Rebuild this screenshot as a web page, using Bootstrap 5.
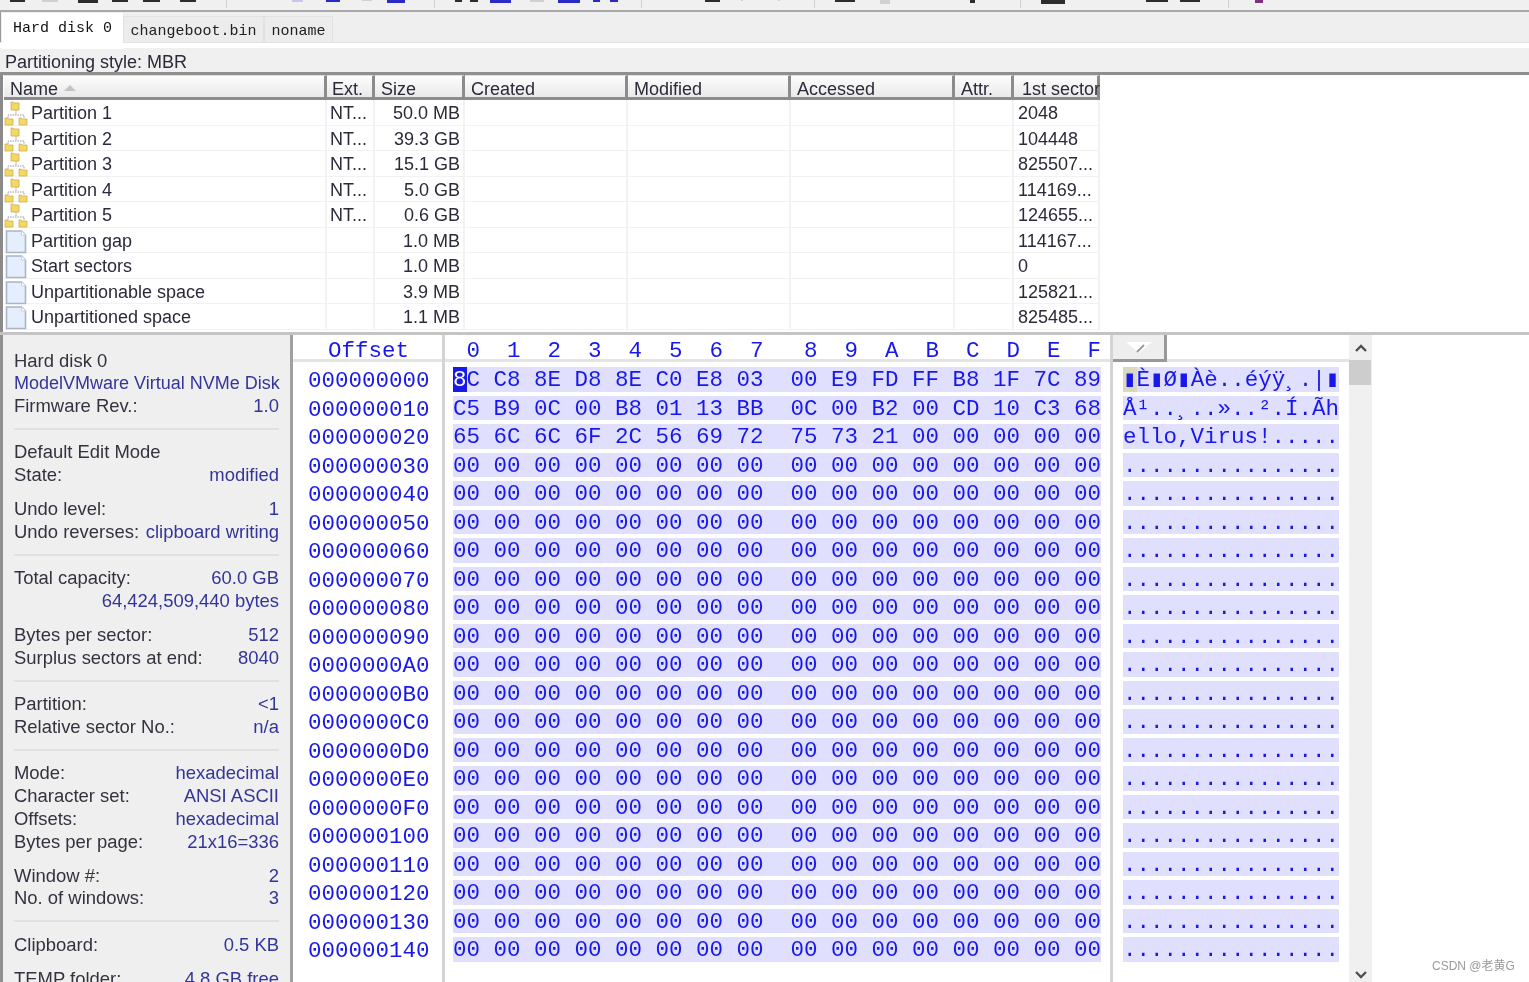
<!DOCTYPE html>
<html lang="en">
<head>
<meta charset="utf-8">
<title>WinHex</title>
<link rel="stylesheet" href="https://cdn.jsdelivr.net/npm/bootstrap@5.3.0/dist/css/bootstrap.min.css">
<style>
html,body{height:982px;overflow:hidden;background:#fff}
body{font-family:"Liberation Sans",Arial,sans-serif;font-size:18px;color:#2a2a3a;position:relative;filter:blur(.35px)}
.tool-strip{display:block;height:10px;background:#f0f0f0}
.tool-rule{height:2px;background:#a8a8a8}
.tab-bar{height:31px;background:#efefef;padding:1px 0 0 1px;border:0;border-left:1px solid #999;align-items:flex-start}
.tab-bar .nav-link{font-family:"Liberation Mono",monospace;font-size:15px;color:#222;border:0;border-radius:0;padding:0;background:#ececec;height:27px;line-height:31px;text-align:center;margin-top:3px;box-shadow:inset 0 0 0 1px #e2e2e2}
.tab-bar .nav-link.active{background:#fff;color:#111;height:36px;line-height:31px;margin-top:0;box-shadow:none;width:121px;font-size:15px}
.tab-two{width:141px}.tab-three{width:69px}
.tab-gap{height:6px;background:#fff;border-top:1px solid #e2e2e2;margin-top:-1px}
.style-line{height:24px;line-height:29px;background:#f0f0f0;padding-left:5px}
.dark-rule{height:3px;background:#8f8f8f}
.vol-wrap{border-left:3px solid #8a8a8a;padding-left:1px;height:257px;background:#fff}
.vol-table{table-layout:fixed;width:1096px;margin:0;border-collapse:separate;border-spacing:0;--bs-table-bg:transparent;color:#2a2a3a}
.vol-table th{height:25px;padding:5px 0 0 6px;font-weight:400;line-height:16px;white-space:nowrap;background:linear-gradient(#fdfdfd,#e9e9e9);border-right:3px solid #8c8c8c;border-bottom:3px solid #8c8c8c;border-top:1px solid #e0e0e0}
.vol-table th.sx{padding-left:8px}
.vol-table td{height:25px;padding:2px 4px 0 3px;line-height:22px;white-space:nowrap;border-right:2px solid #f2f2f2;border-bottom:1px solid #f2f2f2;overflow:visible}
.vol-table tbody tr:nth-child(odd) td{height:26px}
.vol-table td.num{text-align:right;padding-right:3px}
.vol-table td.sec{padding-left:4px}
.name-cell{display:flex;align-items:center;gap:3px;margin-left:-3px}
.ico{flex:none;width:24px;height:25px;margin:-2px 0}
.sort-up{display:inline-block;width:0;height:0;border:6px solid transparent;border-top:0;border-bottom-color:#c4c4c4;margin:0 0 4px 6px}
.lower{height:650px;border-top:3px solid #c4c4c4}
.side{width:293px;flex:none;background:#efefef;border-left:3px solid #8f8f8f;border-right:3px solid #a0a0a0;padding:11px 11px 0 11px;line-height:22.7px;font-size:18.45px;color:#33333f;overflow:hidden}
.side-sec{border-bottom:2px solid #e0e0e0;padding:3.5px 0 10.3px;margin-bottom:8px}
.side-sec:last-child{border:0}
.side-val{color:#34349a}
.tight{font-size:18px;margin-right:-1px}
.air{margin-top:11.3px}
.mono{font-family:"Liberation Mono",monospace;font-size:22.5px;line-height:24px;color:#1818ea}
.head-cell{height:27px;border-bottom:3px solid #e4e4e4;line-height:32px;white-space:pre}
.off-col{width:152px;flex:none;border-right:3px solid #d4d4d4}
.off-head{padding-left:35px}
.off-body{padding-top:4px}
.off-line{padding-left:15px;height:28.5px;line-height:30px}
.hex-col{width:668px;flex:none;border-right:3px solid #d4d4d4}
.hex-head{padding-left:8px}
.hex-body{padding:5px 0 0 8px}
.band{background:#e0e0fe;height:24.5px;line-height:27px;margin-bottom:4px;width:648px;white-space:pre}
.txt-col{width:236px;flex:none}
.drop-btn{width:54px;height:27px;background:#eee;border-right:3px solid #999;border-bottom:3px solid #999;display:flex;align-items:center;justify-content:center}
.txt-head{border-bottom:3px solid #e4e4e4;height:27px}
.txt-body{padding:5px 0 0 10px}
.txt-body .band{width:216px}
.cur-hex{background:#1a1ae8;color:#fff;display:inline-block;height:24.5px;vertical-align:top}
.cur-txt{background:#d9d9c2;display:inline-block;height:24.5px;vertical-align:top}
.scroller{width:23px;flex:none;background:#f0f0f0;height:647px;position:relative}
.thumb{position:absolute;top:25px;left:0;width:22px;height:25px;background:#cdcdcd}
.chev{position:absolute;left:6px;width:12px;height:8px}
.chev-up{top:9px}.chev-dn{top:636px}
.mark-csdn{position:absolute;left:1432px;top:957px;font-size:12px;line-height:18px;color:#9a9a9a;font-family:"Liberation Sans","Noto Sans CJK SC",sans-serif}
</style>
</head>
<body>
<svg class="tool-strip" width="1529" height="10" viewBox="0 0 1529 10" aria-hidden="true">
<g fill="#2c2c2c"><rect x="10" y="0" width="15" height="2"/><rect x="78" y="0" width="20" height="3"/><rect x="112" y="0" width="16" height="2"/><rect x="143" y="0" width="17" height="2"/><rect x="180" y="0" width="16" height="2"/><rect x="455" y="0" width="7" height="2"/><rect x="470" y="0" width="8" height="2"/><rect x="705" y="0" width="15" height="2"/><rect x="835" y="0" width="20" height="2"/><rect x="970" y="0" width="5" height="3"/><rect x="1041" y="0" width="24" height="4"/><rect x="1146" y="0" width="22" height="2"/><rect x="1180" y="0" width="20" height="2"/></g>
<g fill="#d0d0d0"><rect x="42" y="0" width="16" height="2"/><rect x="362" y="0" width="10" height="1"/><rect x="530" y="0" width="14" height="2"/><rect x="741" y="0" width="2" height="1"/><rect x="778" y="0" width="2" height="1"/><rect x="880" y="0" width="10" height="4"/></g>
<g fill="#2a2ac8"><rect x="326" y="0" width="14" height="2"/><rect x="387" y="0" width="18" height="3"/><rect x="490" y="0" width="21" height="3"/><rect x="558" y="0" width="22" height="3"/><rect x="593" y="0" width="7" height="2"/><rect x="610" y="0" width="8" height="2"/></g>
<rect x="292" y="0" width="11" height="2" fill="#c8c8ee"/><rect x="1255" y="0" width="8" height="3" fill="#803080"/>
<g fill="#d0d0d0"><rect x="226" y="0" width="1" height="8"/><rect x="434" y="0" width="1" height="8"/><rect x="641" y="0" width="1" height="8"/><rect x="814" y="0" width="1" height="8"/><rect x="1020" y="0" width="1" height="8"/><rect x="1228" y="0" width="1" height="8"/></g>
</svg>
<div class="tool-rule"></div>
<ul class="nav nav-tabs tab-bar">
<li class="nav-item"><a class="nav-link active" href="#">Hard disk 0</a></li>
<li class="nav-item"><a class="nav-link tab-two" href="#">changeboot.bin</a></li>
<li class="nav-item"><a class="nav-link tab-three" href="#">noname</a></li>
</ul>
<div class="tab-gap"></div>
<div class="style-line">Partitioning style: MBR</div>
<div class="dark-rule"></div>
<div class="vol-wrap">
<svg width="0" height="0" class="position-absolute" aria-hidden="true"><defs>
<symbol id="i-part" viewBox="0 0 24 25"><path d="M12 9v4M4 17v-3h16v3" fill="none" stroke="#999" stroke-dasharray="1.5 1"/><path d="M7 1h2l1 1h5v7H7z" fill="#f6d860" stroke="#c8b058" stroke-width=".8"/><path d="M1 17h2l1 1h5v6H1z" fill="#f6d860" stroke="#c8b058" stroke-width=".8"/><path d="M15 17h2l1 1h5v6h-8z" fill="#f6d860" stroke="#c8b058" stroke-width=".8"/></symbol>
<symbol id="i-file" viewBox="0 0 24 25"><path d="M2.500 2h15l4 4v17.500h-19z" fill="#e4eefc" stroke="#aab4c4" stroke-width="1.600"/><path d="M17.500 2v4h4" fill="#fff" stroke="#c8d0dc"/></symbol>
</defs></svg>
<table class="table vol-table">
<colgroup><col style="width:323px"><col style="width:48px"><col style="width:90px"><col style="width:163px"><col style="width:163px"><col style="width:164px"><col style="width:59px"><col style="width:86px"></colgroup>
<thead><tr><th>Name<span class="sort-up"></span></th><th style="padding-left:5px">Ext.</th><th>Size</th><th>Created</th><th>Modified</th><th>Accessed</th><th>Attr.</th><th class="sx">1st sector</th></tr></thead>
<tbody>
<tr><td><div class="name-cell"><svg class="ico"><use href="#i-part"/></svg>Partition 1</div></td><td>NT...</td><td class="num">50.0 MB</td><td></td><td></td><td></td><td></td><td class="sec">2048</td></tr>
<tr><td><div class="name-cell"><svg class="ico"><use href="#i-part"/></svg>Partition 2</div></td><td>NT...</td><td class="num">39.3 GB</td><td></td><td></td><td></td><td></td><td class="sec">104448</td></tr>
<tr><td><div class="name-cell"><svg class="ico"><use href="#i-part"/></svg>Partition 3</div></td><td>NT...</td><td class="num">15.1 GB</td><td></td><td></td><td></td><td></td><td class="sec">825507...</td></tr>
<tr><td><div class="name-cell"><svg class="ico"><use href="#i-part"/></svg>Partition 4</div></td><td>NT...</td><td class="num">5.0 GB</td><td></td><td></td><td></td><td></td><td class="sec">114169...</td></tr>
<tr><td><div class="name-cell"><svg class="ico"><use href="#i-part"/></svg>Partition 5</div></td><td>NT...</td><td class="num">0.6 GB</td><td></td><td></td><td></td><td></td><td class="sec">124655...</td></tr>
<tr><td><div class="name-cell"><svg class="ico"><use href="#i-file"/></svg>Partition gap</div></td><td></td><td class="num">1.0 MB</td><td></td><td></td><td></td><td></td><td class="sec">114167...</td></tr>
<tr><td><div class="name-cell"><svg class="ico"><use href="#i-file"/></svg>Start sectors</div></td><td></td><td class="num">1.0 MB</td><td></td><td></td><td></td><td></td><td class="sec">0</td></tr>
<tr><td><div class="name-cell"><svg class="ico"><use href="#i-file"/></svg>Unpartitionable space</div></td><td></td><td class="num">3.9 MB</td><td></td><td></td><td></td><td></td><td class="sec">125821...</td></tr>
<tr><td><div class="name-cell"><svg class="ico"><use href="#i-file"/></svg>Unpartitioned space</div></td><td></td><td class="num">1.1 MB</td><td></td><td></td><td></td><td></td><td class="sec">825485...</td></tr>
</tbody></table>
</div>
<div class="lower d-flex">
<aside class="side">
<section class="side-sec">
<div>Hard disk 0</div>
<div class="side-val tight">ModelVMware Virtual NVMe Disk</div>
<div class="d-flex justify-content-between"><span>Firmware Rev.:</span><span class="side-val">1.0</span></div>
</section>
<section class="side-sec">
<div>Default Edit Mode</div>
<div class="d-flex justify-content-between"><span>State:</span><span class="side-val">modified</span></div>
<div class="d-flex justify-content-between air"><span>Undo level:</span><span class="side-val">1</span></div>
<div class="d-flex justify-content-between"><span>Undo reverses:</span><span class="side-val">clipboard writing</span></div>
</section>
<section class="side-sec">
<div class="d-flex justify-content-between"><span>Total capacity:</span><span class="side-val">60.0 GB</span></div>
<div class="text-end side-val">64,424,509,440 bytes</div>
<div class="d-flex justify-content-between air"><span>Bytes per sector:</span><span class="side-val">512</span></div>
<div class="d-flex justify-content-between"><span>Surplus sectors at end:</span><span class="side-val">8040</span></div>
</section>
<section class="side-sec">
<div class="d-flex justify-content-between"><span>Partition:</span><span class="side-val">&lt;1</span></div>
<div class="d-flex justify-content-between"><span>Relative sector No.:</span><span class="side-val">n/a</span></div>
</section>
<section class="side-sec">
<div class="d-flex justify-content-between"><span>Mode:</span><span class="side-val">hexadecimal</span></div>
<div class="d-flex justify-content-between"><span>Character set:</span><span class="side-val">ANSI ASCII</span></div>
<div class="d-flex justify-content-between"><span>Offsets:</span><span class="side-val">hexadecimal</span></div>
<div class="d-flex justify-content-between"><span>Bytes per page:</span><span class="side-val">21x16=336</span></div>
<div class="d-flex justify-content-between air"><span>Window #:</span><span class="side-val">2</span></div>
<div class="d-flex justify-content-between"><span>No. of windows:</span><span class="side-val">3</span></div>
</section>
<section class="side-sec">
<div class="d-flex justify-content-between"><span>Clipboard:</span><span class="side-val">0.5 KB</span></div>
<div class="d-flex justify-content-between air"><span>TEMP folder:</span><span class="side-val">4.8 GB free</span></div>
</section>
</aside>
<div class="off-col mono">
<div class="head-cell off-head">Offset</div>
<div class="off-body">
<div class="off-line">000000000</div><div class="off-line">000000010</div><div class="off-line">000000020</div><div class="off-line">000000030</div><div class="off-line">000000040</div><div class="off-line">000000050</div><div class="off-line">000000060</div><div class="off-line">000000070</div><div class="off-line">000000080</div><div class="off-line">000000090</div><div class="off-line">0000000A0</div><div class="off-line">0000000B0</div><div class="off-line">0000000C0</div><div class="off-line">0000000D0</div><div class="off-line">0000000E0</div><div class="off-line">0000000F0</div><div class="off-line">000000100</div><div class="off-line">000000110</div><div class="off-line">000000120</div><div class="off-line">000000130</div><div class="off-line">000000140</div>
</div>
</div>
<div class="hex-col mono">
<div class="head-cell hex-head"> 0  1  2  3  4  5  6  7   8  9  A  B  C  D  E  F</div>
<div class="hex-body">
<div class="band"><span class="cur-hex">8</span>C C8 8E D8 8E C0 E8 03  00 E9 FD FF B8 1F 7C 89</div>
<div class="band">C5 B9 0C 00 B8 01 13 BB  0C 00 B2 00 CD 10 C3 68</div>
<div class="band">65 6C 6C 6F 2C 56 69 72  75 73 21 00 00 00 00 00</div>
<div class="band">00 00 00 00 00 00 00 00  00 00 00 00 00 00 00 00</div>
<div class="band">00 00 00 00 00 00 00 00  00 00 00 00 00 00 00 00</div>
<div class="band">00 00 00 00 00 00 00 00  00 00 00 00 00 00 00 00</div>
<div class="band">00 00 00 00 00 00 00 00  00 00 00 00 00 00 00 00</div>
<div class="band">00 00 00 00 00 00 00 00  00 00 00 00 00 00 00 00</div>
<div class="band">00 00 00 00 00 00 00 00  00 00 00 00 00 00 00 00</div>
<div class="band">00 00 00 00 00 00 00 00  00 00 00 00 00 00 00 00</div>
<div class="band">00 00 00 00 00 00 00 00  00 00 00 00 00 00 00 00</div>
<div class="band">00 00 00 00 00 00 00 00  00 00 00 00 00 00 00 00</div>
<div class="band">00 00 00 00 00 00 00 00  00 00 00 00 00 00 00 00</div>
<div class="band">00 00 00 00 00 00 00 00  00 00 00 00 00 00 00 00</div>
<div class="band">00 00 00 00 00 00 00 00  00 00 00 00 00 00 00 00</div>
<div class="band">00 00 00 00 00 00 00 00  00 00 00 00 00 00 00 00</div>
<div class="band">00 00 00 00 00 00 00 00  00 00 00 00 00 00 00 00</div>
<div class="band">00 00 00 00 00 00 00 00  00 00 00 00 00 00 00 00</div>
<div class="band">00 00 00 00 00 00 00 00  00 00 00 00 00 00 00 00</div>
<div class="band">00 00 00 00 00 00 00 00  00 00 00 00 00 00 00 00</div>
<div class="band">00 00 00 00 00 00 00 00  00 00 00 00 00 00 00 00</div>
</div>
</div>
<div class="txt-col mono">
<div class="txt-head"><div class="drop-btn"><svg width="28" height="14" viewBox="0 0 28 14" aria-hidden="true"><path d="M1 2h26L14 13z" fill="#fff"/><path d="M12 12l7-7" stroke="#9a9a9a" stroke-width="2"/></svg></div></div>
<div class="txt-body">
<div class="band"><span class="cur-txt">▮</span>È▮Ø▮Àè..éýÿ¸.|▮</div>
<div class="band">Å¹..¸..»..².Í.Ãh</div>
<div class="band">ello,Virus!.....</div>
<div class="band">................</div>
<div class="band">................</div>
<div class="band">................</div>
<div class="band">................</div>
<div class="band">................</div>
<div class="band">................</div>
<div class="band">................</div>
<div class="band">................</div>
<div class="band">................</div>
<div class="band">................</div>
<div class="band">................</div>
<div class="band">................</div>
<div class="band">................</div>
<div class="band">................</div>
<div class="band">................</div>
<div class="band">................</div>
<div class="band">................</div>
<div class="band">................</div>
</div>
</div>
<div class="scroller">
<svg class="chev chev-up" viewBox="0 0 12 8" aria-hidden="true"><path d="M1 7l5-5 5 5" fill="none" stroke="#505050" stroke-width="2.400"/></svg>
<div class="thumb"></div>
<svg class="chev chev-dn" viewBox="0 0 12 8" aria-hidden="true"><path d="M1 1l5 5 5-5" fill="none" stroke="#505050" stroke-width="2.400"/></svg>
</div>
</div>
<div class="mark-csdn">CSDN @老黄G</div>
<script src="https://cdn.jsdelivr.net/npm/bootstrap@5.3.0/dist/js/bootstrap.bundle.min.js"></script>
</body>
</html>
